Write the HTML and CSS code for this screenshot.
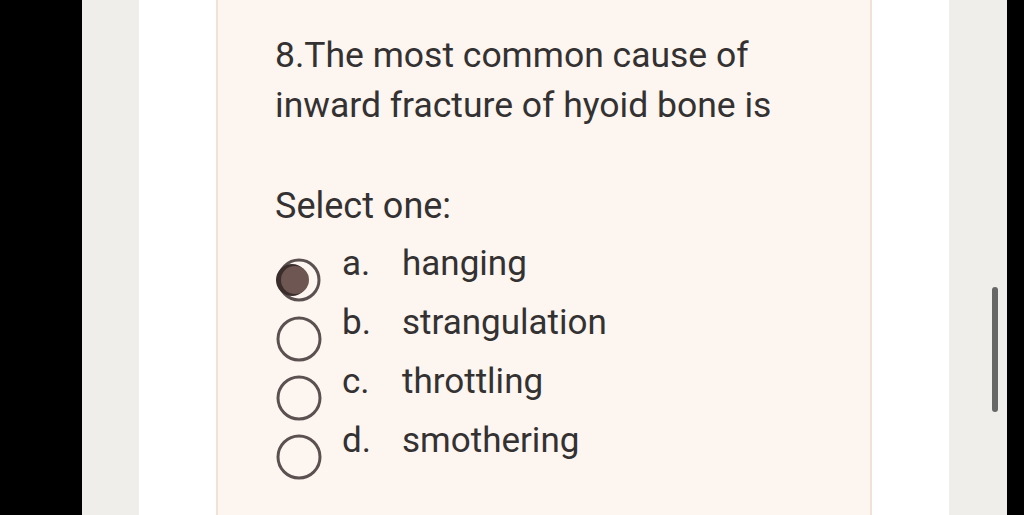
FILE: index.html
```html
<!DOCTYPE html>
<html>
<head>
<meta charset="utf-8">
<link rel="stylesheet" href="styles.css">
</head>
<body>
<div class="screen">
  <div class="edge"></div>
  <div class="gutter"></div>
  <div class="margin"></div>
  <div class="card">
    <div class="question">8.The most common cause of inward fracture of hyoid bone is</div>
    <div class="prompt">Select one:</div>
    <div class="options">
      <div class="option">
        <svg class="radio" width="50" height="50" viewBox="0 0 50 50">
          <circle cx="25" cy="25" r="20" fill="none" stroke="#5b5150" stroke-width="3"/>
          <circle cx="18" cy="25" r="16" fill="#3a2e2c"/>
          <circle cx="21" cy="25" r="14" fill="#6e5752"/>
        </svg>
        <span class="letter">a.</span><span class="label">hanging</span>
      </div>
      <div class="option">
        <svg class="radio" width="50" height="50" viewBox="0 0 50 50">
          <circle cx="25" cy="25" r="21" fill="none" stroke="#5b5150" stroke-width="3"/>
        </svg>
        <span class="letter">b.</span><span class="label">strangulation</span>
      </div>
      <div class="option">
        <svg class="radio" width="50" height="50" viewBox="0 0 50 50">
          <circle cx="25" cy="25" r="21" fill="none" stroke="#5b5150" stroke-width="3"/>
        </svg>
        <span class="letter">c.</span><span class="label">throttling</span>
      </div>
      <div class="option">
        <svg class="radio" width="50" height="50" viewBox="0 0 50 50">
          <circle cx="25" cy="25" r="21" fill="none" stroke="#5b5150" stroke-width="3"/>
        </svg>
        <span class="letter">d.</span><span class="label">smothering</span>
      </div>
    </div>
  </div>
  <div class="margin"></div>
  <div class="gutter right">
    <div class="scrollbar"></div>
  </div>
  <div class="edge"></div>
</div>
</body>
</html>
```

FILE: styles.css
```css
html, body {
  margin: 0;
  padding: 0;
  width: 1024px;
  height: 515px;
  overflow: hidden;
  background: #000;
}
.screen {
  display: flex;
  width: 1024px;
  height: 515px;
  font-family: Roboto, "Liberation Sans", sans-serif;
  color: #333131;
}
.edge {
  width: 82px;
  background: #000;
  flex: none;
}
.edge:last-child {
  width: 16px;
}
.gutter {
  width: 57px;
  background: #efeeea;
  flex: none;
}
.gutter.right {
  width: 58px;
  position: relative;
}
.scrollbar {
  position: absolute;
  left: 43px;
  top: 287px;
  width: 6px;
  height: 125px;
  border-radius: 3px;
  background: #676767;
}
.margin {
  width: 77px;
  background: #ffffff;
  flex: none;
}
.card {
  width: 656px;
  flex: none;
  background: #fdf5ef;
  border-left: 2px solid #efe2d8;
  border-right: 2px solid #efe2d8;
  padding: 30px 0 0 57px;
  box-sizing: border-box;
}
.question {
  font-size: 35.5px;
  line-height: 50px;
  width: 510px;
}
.prompt {
  font-size: 36px;
  line-height: 50px;
  margin-top: 51px;
}
.options {
  display: flex;
  flex-direction: column;
  margin-top: 3px;
  margin-left: -1px;
}
.option {
  display: flex;
  align-items: flex-start;
  height: 59px;
  line-height: 59px;
  font-size: 35px;
}
.radio {
  flex: none;
  margin-top: 21px;
  margin-right: 18px;
}
.letter {
  width: 60px;
}
```
